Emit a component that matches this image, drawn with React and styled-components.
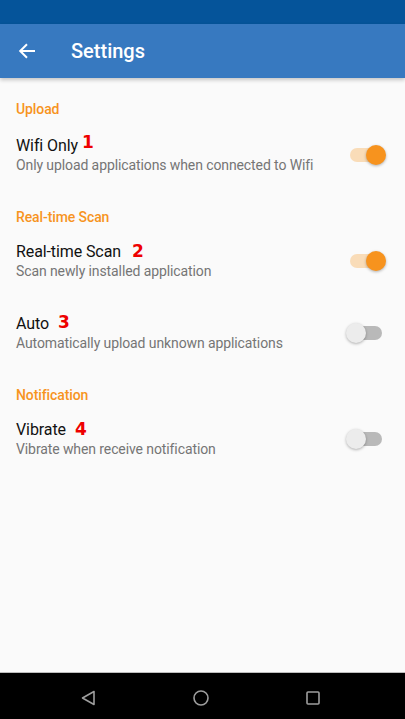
import React from "react";
import styled, { createGlobalStyle } from "styled-components";

const Global = createGlobalStyle`
  html, body { margin: 0; padding: 0; background: #fafafa; }
  body { font-family: Roboto, "Noto Sans", "Liberation Sans", sans-serif; }
  * { box-sizing: border-box; }
`;

const Screen = styled.div`
  width: 405px;
  height: 719px;
  display: flex;
  flex-direction: column;
  background: #fafafa;
  overflow: hidden;
`;

const StatusBar = styled.div`
  height: 24px;
  background: #05549a;
  flex: none;
`;

const AppBar = styled.div`
  height: 54px;
  background: #3779c0;
  display: flex;
  align-items: center;
  padding-left: 18px;
  gap: 35px;
  flex: none;
  box-shadow: 0 2px 4px rgba(0, 0, 0, 0.22);
  position: relative;
  z-index: 1;
`;

const BackButton = styled.div`
  width: 18px;
  height: 18px;
  display: flex;
  align-items: center;
  justify-content: center;
`;

const Title = styled.div`
  color: #ffffff;
  font-size: 20px;
  font-weight: 500;
`;

const Content = styled.div`
  flex: 1;
  display: flex;
  flex-direction: column;
`;

const CategoryHeader = styled.div`
  height: ${(p) => (p.$first ? 41 : 34)}px;
  padding: ${(p) => (p.$first ? 21 : 16)}px 16px 0;
  line-height: 20px;
  font-size: 14px;
  font-weight: 500;
  color: #f7941e;
  letter-spacing: -0.1px;
`;

const Row = styled.div`
  height: 72px;
  display: flex;
  align-items: center;
  padding: 0 19px 0 16px;
`;

const TextBlock = styled.div`
  flex: 1;
  display: flex;
  flex-direction: column;
  min-width: 0;
  gap: 0;
`;

const RowTitle = styled.div`
  font-size: 16px;
  line-height: 20px;
  color: #111111;
  display: flex;
  align-items: baseline;
  white-space: nowrap;
  letter-spacing: -0.1px;
`;

const Marker = styled.span`
  color: #ee0000;
  font-family: "DejaVu Sans", "Noto Sans", sans-serif;
  font-weight: bold;
  font-size: 17px;
  letter-spacing: 0;
  margin-left: ${(p) => p.$gap}px;
  position: relative;
  top: ${(p) => p.$raise || 0}px;
`;

const Summary = styled.div`
  font-size: 14px;
  line-height: 19px;
  color: #757575;
  white-space: nowrap;
  letter-spacing: -0.1px;
`;

const SwitchBox = styled.div`
  position: relative;
  width: 40px;
  height: 20px;
  flex: none;
  margin-left: 8px;
`;

const Track = styled.div`
  position: absolute;
  left: 4px;
  right: 4px;
  top: 3px;
  height: 14px;
  border-radius: 7px;
  background: ${(p) => (p.$on ? "#f9dcb8" : "#b9b9b9")};
`;

const Thumb = styled.div`
  position: absolute;
  top: 0;
  ${(p) => (p.$on ? "right: 0;" : "left: 0;")}
  width: 20px;
  height: 20px;
  border-radius: 50%;
  background: ${(p) => (p.$on ? "#f7931e" : "#ececec")};
  box-shadow: 0 1px 3px rgba(0, 0, 0, 0.3);
`;

const NavBar = styled.div`
  height: 47px;
  background: #000;
  border-top: 1px solid #bdbdbd;
  display: flex;
  align-items: center;
  justify-content: center;
  gap: 88px;
  padding-top: 4px;
  padding-right: 4px;
  flex: none;
`;

const NavIcon = styled.div`
  width: 24px;
  height: 24px;
  display: flex;
  align-items: center;
  justify-content: center;
`;

const Switch = ({ on }) => (
  <SwitchBox>
    <Track $on={on} />
    <Thumb $on={on} />
  </SwitchBox>
);

const Pref = ({ title, summary, mark, gap, raise, on }) => (
  <Row>
    <TextBlock>
      <RowTitle>
        {title}
        <Marker $gap={gap} $raise={raise}>{mark}</Marker>
      </RowTitle>
      <Summary>{summary}</Summary>
    </TextBlock>
    <Switch on={on} />
  </Row>
);

export default function App() {
  return (
    <Screen>
      <Global />
      <StatusBar />
      <AppBar>
        <BackButton>
          <svg width="18" height="18" viewBox="0 0 18 18">
            <path d="M17 9H2.5M9 2.2L2.2 9L9 15.8" stroke="#fff" strokeWidth="2" fill="none" />
          </svg>
        </BackButton>
        <Title>Settings</Title>
      </AppBar>
      <Content>
        <CategoryHeader $first>Upload</CategoryHeader>
        <Pref title="Wifi Only" summary="Only upload applications when connected to Wifi" mark="1" gap={4} raise={-3} on />
        <CategoryHeader>Real-time Scan</CategoryHeader>
        <Pref title="Real-time Scan" summary="Scan newly installed application" mark="2" gap={11} on />
        <Pref title="Auto" summary="Automatically upload unknown applications" mark="3" gap={9} raise={-1} on={false} />
        <CategoryHeader>Notification</CategoryHeader>
        <Pref title="Vibrate" summary="Vibrate when receive notification" mark="4" gap={9} on={false} />
      </Content>
      <NavBar>
        <NavIcon>
          <svg width="16" height="16" viewBox="0 0 16 16">
            <path d="M13 1.5V14.5L1.5 8Z" stroke="#9e9e9e" strokeWidth="1.6" fill="none" strokeLinejoin="round" />
          </svg>
        </NavIcon>
        <NavIcon>
          <svg width="18" height="18" viewBox="0 0 18 18">
            <circle cx="9" cy="9" r="7" stroke="#9e9e9e" strokeWidth="1.6" fill="none" />
          </svg>
        </NavIcon>
        <NavIcon>
          <svg width="16" height="16" viewBox="0 0 16 16">
            <rect x="2" y="2" width="12" height="12" rx="1" stroke="#9e9e9e" strokeWidth="1.6" fill="none" />
          </svg>
        </NavIcon>
      </NavBar>
    </Screen>
  );
}
